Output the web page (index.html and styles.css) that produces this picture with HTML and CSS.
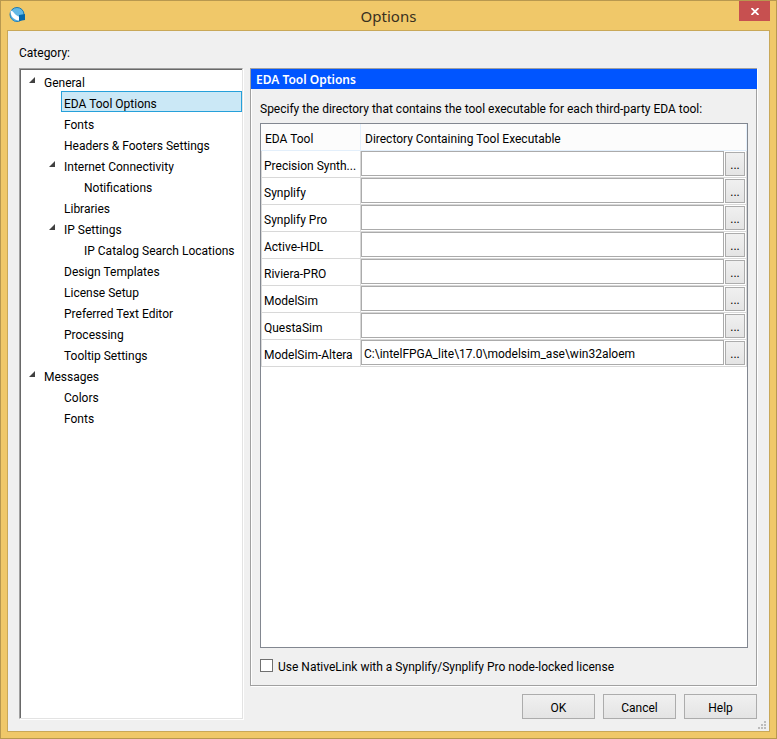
FILE: index.html
```html
<!DOCTYPE html>
<html lang="en">
<head>
<meta charset="utf-8">
<title>Options</title>
<link rel="stylesheet" href="styles.css">
</head>
<body>
<div class="window">
  <header class="titlebar">
    <svg class="app-icon" viewBox="0 0 17 17" aria-hidden="true">
      <circle cx="8" cy="7.500" r="7" fill="#62b9e6" stroke="#1d78ad"/>
      <path d="M1.500 3.500C4 3 5 8 11 10l-1 3.500C5 13 1 9 1.500 3.500z" fill="#fff"/>
      <path d="M1 7c1 4 4 6 8 7l-3 .5C3 13 1 10 1 7z" fill="#4aa6d8"/>
      <path d="M10 8l6-1v6l-6 1z" fill="#0768ab"/>
    </svg>
    <h1 class="title">Options</h1>
    <button class="close" type="button" aria-label="Close">
      <svg viewBox="0 0 8 7" width="8" height="7" aria-hidden="true"><path d="M.5 0L7.500 7M7.500 0L.5 7" stroke="#fff" stroke-width="1.8"/></svg>
    </button>
  </header>
  <main class="client">
    <h2 class="category">Category:</h2>
    <div class="columns">
      <ul class="tree">
        <li><span class="item parent">General</span>
          <ul>
            <li><span class="item selected">EDA Tool Options</span></li>
            <li><span class="item">Fonts</span></li>
            <li><span class="item">Headers &amp; Footers Settings</span></li>
            <li><span class="item parent">Internet Connectivity</span>
              <ul><li><span class="item">Notifications</span></li></ul></li>
            <li><span class="item">Libraries</span></li>
            <li><span class="item parent">IP Settings</span>
              <ul><li><span class="item">IP Catalog Search Locations</span></li></ul></li>
            <li><span class="item">Design Templates</span></li>
            <li><span class="item">License Setup</span></li>
            <li><span class="item">Preferred Text Editor</span></li>
            <li><span class="item">Processing</span></li>
            <li><span class="item">Tooltip Settings</span></li>
          </ul></li>
        <li><span class="item parent">Messages</span>
          <ul>
            <li><span class="item">Colors</span></li>
            <li><span class="item">Fonts</span></li>
          </ul></li>
      </ul>
      <div class="right">
        <section class="panel">
          <h2 class="panel-title">EDA Tool Options</h2>
          <div class="panel-body">
            <p class="intro">Specify the directory that contains the tool executable for each third-party EDA tool:</p>
            <div class="table-box">
              <table>
                <colgroup><col class="col-tool"><col><col class="col-pick"></colgroup>
                <thead><tr><th>EDA Tool</th><th colspan="2">Directory Containing Tool Executable</th></tr></thead>
                <tbody>
                  <tr><td class="tool"><label for="d1">Precision Synth...</label></td><td><input id="d1" type="text"></td><td class="pick"><button type="button">...</button></td></tr>
                  <tr><td class="tool"><label for="d2">Synplify</label></td><td><input id="d2" type="text"></td><td class="pick"><button type="button">...</button></td></tr>
                  <tr><td class="tool"><label for="d3">Synplify Pro</label></td><td><input id="d3" type="text"></td><td class="pick"><button type="button">...</button></td></tr>
                  <tr><td class="tool"><label for="d4">Active-HDL</label></td><td><input id="d4" type="text"></td><td class="pick"><button type="button">...</button></td></tr>
                  <tr><td class="tool"><label for="d5">Riviera-PRO</label></td><td><input id="d5" type="text"></td><td class="pick"><button type="button">...</button></td></tr>
                  <tr><td class="tool"><label for="d6">ModelSim</label></td><td><input id="d6" type="text"></td><td class="pick"><button type="button">...</button></td></tr>
                  <tr><td class="tool"><label for="d7">QuestaSim</label></td><td><input id="d7" type="text"></td><td class="pick"><button type="button">...</button></td></tr>
                  <tr><td class="tool"><label for="d8">ModelSim-Altera</label></td><td><input id="d8" type="text" value="C:\intelFPGA_lite\17.0\modelsim_ase\win32aloem"></td><td class="pick"><button type="button">...</button></td></tr>
                </tbody>
              </table>
            </div>
            <div class="check">
              <input id="native" type="checkbox">
              <label for="native">Use NativeLink with a Synplify/Synplify Pro node-locked license</label>
            </div>
          </div>
        </section>
        <div class="actions">
          <button type="button">OK</button>
          <button type="button">Cancel</button>
          <button type="button">Help</button>
        </div>
      </div>
    </div>
    <svg class="grip" viewBox="0 0 8 8" aria-hidden="true"><path d="M6 0h2v2H6zM3 3h2v2H3zM6 3h2v2H6zM0 6h2v2H0zM3 6h2v2H3zM6 6h2v2H6z" fill="#bcbcbc"/></svg>
  </main>
</div>
</body>
</html>
```
FILE: styles.css
```css
* { box-sizing: border-box; }

body {
  margin: 0;
  font: 12px/20px Roboto, "Noto Sans", sans-serif;
  color: #000;
}

h1, h2, p, ul { margin: 0; padding: 0; font-size: 12px; font-weight: 400; }
ul { list-style: none; }
button, input { font: inherit; color: inherit; margin: 0; }

.window {
  display: flex;
  flex-direction: column;
  min-height: 100vh;
  padding: 0 6px 6px;
  border: 1px solid #b8984f;
  background: #f0c869;
}

.titlebar {
  display: grid;
  grid-template-columns: 31px 1fr 31px;
  height: 29px;
}
.app-icon { width: 17px; height: 17px; margin: 6px 0 0 2px; }
.title {
  font-family: "Noto Sans", sans-serif;
  font-size: 15px;
  line-height: 30px;
  text-align: center;
  color: #38301f;
}
.close {
  display: flex;
  align-items: center;
  justify-content: center;
  height: 20px;
  padding: 0;
  border: 0;
  background: #c75050;
}

.client {
  position: relative;
  flex: 1;
  display: flex;
  flex-direction: column;
  padding: 12px 12px 12px 11px;
  border: 1px solid #c9a858;
  background: #f0f0f0;
}
.category { margin-bottom: 5px; }
.columns {
  flex: 1;
  display: grid;
  grid-template-columns: 224px 1fr;
  gap: 7px;
}

.tree {
  background: #fff;
  border: 1px solid;
  border-color: #a0a0a0 #e3e3e3 #e3e3e3 #a0a0a0;
  box-shadow: inset 1px 1px 0 #696969, 1px 1px 0 #fff;
  padding: 1px 0 0 21px;
}
.tree ul { padding-left: 20px; }
.item {
  position: relative;
  display: block;
  height: 21px;
  padding: 3px 0 0 3px;
  line-height: 20px;
  white-space: nowrap;
}
.selected {
  border: 1px solid #26a0da;
  background: #cbe8f6;
  padding: 2px 0 0 2px;
}
.parent::before {
  content: "";
  position: absolute;
  left: -12px;
  top: 7px;
  width: 6px;
  height: 6px;
  background: #404040;
  clip-path: polygon(100% 0, 100% 100%, 0 100%);
}

.right { display: flex; flex-direction: column; gap: 8px; min-width: 0; }
.panel {
  flex: 1;
  display: flex;
  flex-direction: column;
  border: 1px solid #a0a0a0;
  box-shadow: inset 1px 1px 0 #fff, 1px 1px 0 #fff;
}
.panel-title {
  margin-right: -1px;
  padding: 1px 0 0 5px;
  height: 20px;
  background: #0055ff;
  color: #fff;
  font-family: "Noto Sans", sans-serif;
  font-weight: 600;
}
.panel-body {
  flex: 1;
  display: flex;
  flex-direction: column;
  padding: 10px 8px 8px 9px;
}
.intro { margin-bottom: 4px; white-space: nowrap; }

.table-box {
  flex: 1;
  border: 1px solid #828790;
  background: #fff;
}
table {
  width: 100%;
  table-layout: fixed;
  border-collapse: separate;
  border-spacing: 0;
}
.col-tool { width: 100px; }
.col-pick { width: 23px; }
th, td { height: 27px; padding: 0; text-align: left; font-weight: 400; }
th {
  padding: 3px 4px 0;
  border: solid #e3effb;
  border-width: 0 1px 1px 0;
  background: #fcfcfc;
}
td { border-bottom: 1px solid #d8d8d8; }
td.tool {
  padding: 4px 0 0 2px;
  border: solid #d8d8d8;
  border-width: 0 1px 1px;
  white-space: nowrap;
}
td input {
  display: block;
  width: 100%;
  height: 25px;
  margin-bottom: 1px;
  padding: 2px 2px 0;
  border: 1px solid #ababab;
  background: #fff;
}
.pick { border-right: 1px solid #d8d8d8; }
.pick button {
  display: block;
  width: 20px;
  height: 24px;
  margin-left: 1px;
  padding: 2px 0 0;
}
.pick button, .actions button {
  border: 1px solid #acacac;
  background: linear-gradient(#f0f0f0, #e4e4e4);
}

.check { display: flex; align-items: flex-start; gap: 5px; margin-top: 9px; }
.check input {
  appearance: none;
  width: 13px;
  height: 13px;
  margin-top: 2px;
  border: 1px solid #707070;
  background: #fff;
}

.actions { display: flex; justify-content: flex-end; gap: 8px; }
.actions button { width: 73px; height: 25px; padding: 2px 0 0; }

.grip { position: absolute; right: 3px; bottom: 2px; width: 8px; height: 8px; }
```
